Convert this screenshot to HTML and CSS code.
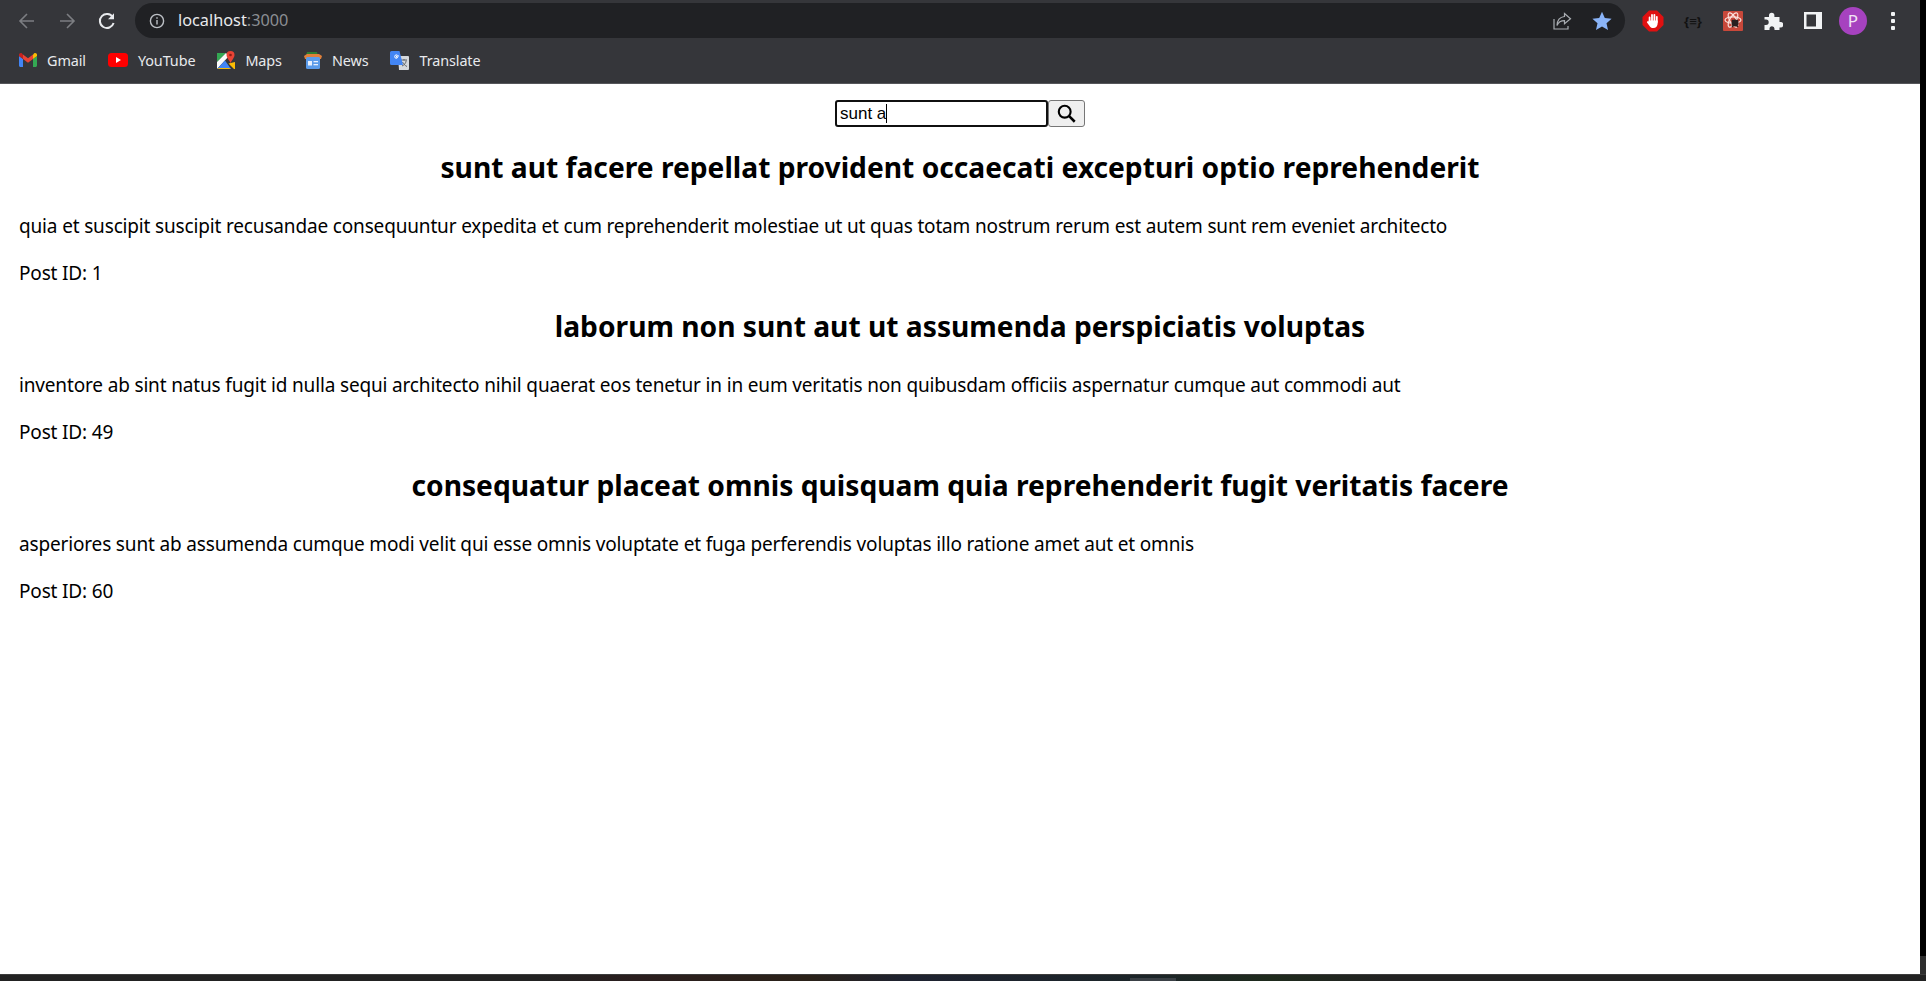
FILE: index.html
```html
<!DOCTYPE html>
<html lang="en">
  <head>
    <meta charset="UTF-8" />
    <meta name="viewport" content="width=device-width, initial-scale=1.0" />
    <title>localhost:3000</title>
    <link rel="stylesheet" href="styles.css">
  </head>
  <body>
    <div class="screen">
      <div class="window">
        <!-- Browser toolbar -->
        <header class="toolbar">
          <div class="nav-btn">
            <svg width="20" height="20" viewBox="0 0 20 20" fill="none" stroke="#7c7e82" stroke-width="1.6"><path d="M17 10H3.500M10 3l-7 7 7 7" /></svg>
          </div>
          <div class="nav-btn">
            <svg width="20" height="20" viewBox="0 0 20 20" fill="none" stroke="#7c7e82" stroke-width="1.6"><path d="M3 10h13.500M10 3l7 7-7 7" /></svg>
          </div>
          <div class="nav-btn">
            <svg width="20" height="20" viewBox="0 0 20 20" fill="none" stroke="#e8eaed" stroke-width="2"><path d="M15.800 6.200A7 7 0 1 0 16.600 12" /><path d="M17 2.200v6h-6z" fill="#e8eaed" stroke="none" /></svg>
          </div>
          <div class="omnibox">
            <svg class="info-icon" width="16" height="16" viewBox="0 0 16 16" fill="none" stroke="#bdc1c6" stroke-width="1.4"><circle cx="8" cy="8" r="6.600" /><path d="M8 7v4.600M8 4.200v1.600" /></svg>
            <span class="url">localhost<span class="url-port">:3000</span></span>
            <svg class="share-icon" width="20" height="20" viewBox="0 0 20 20" fill="none" stroke="#a9adb2" stroke-width="1.2"><path d="M2 8v10h14v-3" /><path d="M12.500 2.500l6 5.200-6 5v-3C9 9.700 6.500 11 5 14.500c.2-5 3-8.500 7.500-9z" /></svg>
            <svg class="star-icon" width="20" height="20" viewBox="0 0 20 20"><path d="M10 .8l2.800 6.300 6.800.7-5.100 4.500 1.500 6.700L10 15.500 4 19l1.500-6.700L.4 7.800l6.800-.7z" fill="#8ab4f8" /></svg>
          </div>
          <div class="extensions">
            <div class="ext-btn">
              <svg width="22" height="22" viewBox="0 0 22 22"><path d="M7 .5h8L21.500 7v8L15 21.500H7L.5 15V7z" fill="#e01010" /><g fill="none" stroke="#fff" stroke-width="1.800" stroke-linecap="round"><path d="M7.600 12V7.500M10 11V5M12.400 11V4.800M14.800 12V6.800" /></g><path d="M6.700 10.500h9V13c0 3-1.700 5-4.400 5-2 0-3-.8-3.900-2.300L5 12.500c-.5-1 .8-1.800 1.700-1z" fill="#fff" /></svg>
            </div>
            <div class="ext-btn">
              <span class="json-icon">{≡}</span>
            </div>
            <div class="ext-btn">
              <svg width="20" height="20" viewBox="0 0 20 20"><rect width="20" height="20" rx="1" fill="#c8483a" /><g fill="none" stroke="#fbe3de" stroke-width="1.200"><ellipse cx="10" cy="9" rx="8" ry="3.200" /><ellipse cx="10" cy="9" rx="8" ry="3.200" transform="rotate(60 10 9)" /><ellipse cx="10" cy="9" rx="8" ry="3.200" transform="rotate(120 10 9)" /></g><circle cx="12" cy="12" r="3.500" fill="#2a2020" /><path d="M9 9l6 7M15 9l-6 7" stroke="#2a2020" stroke-width="1.300" /></svg>
            </div>
            <div class="ext-btn">
              <svg width="20" height="20" viewBox="0 0 20 20"><path d="M1.500 6H6V4.500a2.700 2.700 0 0 1 5.400 0V6h5.100v5h1a2.800 2.800 0 0 1 0 5.600h-1V19H11.500v-1.300a2.500 2.500 0 0 0-5 0V19h-5v-5H3a2.700 2.700 0 0 0 0-5.400H1.500z" fill="#f1f3f4" /></svg>
            </div>
            <div class="ext-btn">
              <svg width="18" height="17" viewBox="0 0 18 17"><path d="M0 0h18v17H0zM2.500 2.500v12H12v-12z" fill="#f1f3f4" fill-rule="evenodd" /></svg>
            </div>
            <div class="ext-btn">
              <span class="avatar">P</span>
            </div>
            <div class="ext-btn">
              <span class="dots"><i></i><i></i><i></i></span>
            </div>
          </div>
        </header>

        <!-- Bookmarks -->
        <nav class="bookmarks">
          <a class="bookmark" href="#">
            <svg width="18" height="14" viewBox="0 0 18 14"><path d="M0 3v9.500C0 13.300.7 14 1.500 14H4V6z" fill="#4285f4" /><path d="M18 3v9.500c0 .8-.7 1.500-1.500 1.500H14V6z" fill="#34a853" /><path d="M14 1.500V6l4-3V1.800C18 .3 16.300-.500 15 .4z" fill="#fbbc04" /><path d="M4 6V1.500L9 5.300l5-3.800V6L9 9.800z" fill="#ea4335" /><path d="M0 1.800V3l4 3V1.500L3 .4C1.700-.500 0 .3 0 1.800z" fill="#c5221f" /></svg>
            <span>Gmail</span>
          </a>
          <a class="bookmark" href="#">
            <svg width="20" height="14" viewBox="0 0 20 14"><rect width="20" height="14" rx="3.500" fill="#f00" /><path d="M8 4l5 3-5 3z" fill="#fff" /></svg>
            <span>YouTube</span>
          </a>
          <a class="bookmark" href="#">
            <svg width="18" height="18" viewBox="0 0 18 18"><path d="M0 2h9L0 11z" fill="#34a853" /><path d="M0 11l9-9 3 3L0 18z" fill="#fbfbfb" /><path d="M0 18L8 9.500 14 18z" fill="#4285f4" /><path d="M0 18h14l-2 -1H2z" fill="#fbbc04" /><path d="M11.500 12.500L17 18h1v-7z" fill="#fbbc04" /><path d="M13.500 0a4 4 0 0 1 4 4c0 3-4 6.500-4 8.500 0-2-4-5.500-4-8.500a4 4 0 0 1 4-4z" fill="#ea4335" /><circle cx="13.500" cy="4" r="1.300" fill="#8c1c13" /></svg>
            <span>Maps</span>
          </a>
          <a class="bookmark" href="#">
            <svg width="18" height="17" viewBox="0 0 18 17"><path d="M3 0h10l1 4H2z" fill="#2e7d32" /><path d="M0 4l3-2h12l3 2-1 3H1z" fill="#e0803a" /><rect x="2" y="5" width="14" height="12" rx="1.500" fill="#5a9bea" /><rect x="4" y="9" width="4" height="4.500" fill="#e8f0fe" /><rect x="9.500" y="9" width="4.500" height="1.300" fill="#e8f0fe" /><rect x="9.500" y="12" width="4.500" height="1.300" fill="#e8f0fe" /></svg>
            <span>News</span>
          </a>
          <a class="bookmark" href="#">
            <svg width="19" height="19" viewBox="0 0 19 19"><path d="M8 5h10a1 1 0 0 1 1 1v12a1 1 0 0 1-1 1H9z" fill="#d5d8dc" /><path d="M11 9h6M14 8v1.500M12 15c2.500-1 4-3 4.200-5.500M12.500 11c1 2 2.500 3.500 4.500 4.500" fill="none" stroke="#5f6368" stroke-width="1" /><path d="M1.500 0h8L13 14H1.500A1.500 1.500 0 0 1 0 12.500v-11A1.500 1.500 0 0 1 1.500 0z" fill="#4285f4" /><path d="M9 5H6.500v1.300h1.200c-.2.700-.8 1-1.300 1a1.700 1.700 0 0 1 0-3.400c.4 0 .8.100 1.100.4" fill="none" stroke="#fff" stroke-width="1" /></svg>
            <span>Translate</span>
          </a>
        </nav>

        <!-- Page content -->
        <main class="page">
          <form class="search-form">
            <div class="search-input"><span>sunt a</span><i class="caret"></i></div>
            <button type="button" class="search-btn">
              <svg width="19" height="19" viewBox="0 0 18 18" fill="none" stroke="#000" stroke-width="2"><circle cx="7.300" cy="7.300" r="5.600" /><path d="M11.300 11.300l5.500 5.500" stroke-width="2.400" /></svg>
            </button>
          </form>

          <article class="post">
            <h2>sunt aut facere repellat provident occaecati excepturi optio reprehenderit</h2>
            <p>quia et suscipit suscipit recusandae consequuntur expedita et cum reprehenderit molestiae ut ut quas totam nostrum rerum est autem sunt rem eveniet architecto</p>
            <p>Post ID: 1</p>
          </article>
          <article class="post">
            <h2>laborum non sunt aut ut assumenda perspiciatis voluptas</h2>
            <p>inventore ab sint natus fugit id nulla sequi architecto nihil quaerat eos tenetur in in eum veritatis non quibusdam officiis aspernatur cumque aut commodi aut</p>
            <p>Post ID: 49</p>
          </article>
          <article class="post">
            <h2>consequatur placeat omnis quisquam quia reprehenderit fugit veritatis facere</h2>
            <p>asperiores sunt ab assumenda cumque modi velit qui esse omnis voluptate et fuga perferendis voluptas illo ratione amet aut et omnis</p>
            <p>Post ID: 60</p>
          </article>
        </main>
      </div>

      <div class="edge">
        <div class="edge-top"></div>
        <div class="edge-bottom"></div>
      </div>
    </div>
    <div class="taskbar"></div>
  </body>
</html>
```

FILE: styles.css
```css
* {
  box-sizing: border-box;
}

html,
body {
  height: 100%;
  margin: 0;
  overflow: hidden;
}

body {
  display: flex;
  flex-direction: column;
  font-family: "Noto Sans", "Open Sans", sans-serif;
  color: #000;
  background-color: #fff;
}

.screen {
  display: flex;
  height: 974px;
}

.window {
  width: 1920px;
  display: flex;
  flex-direction: column;
}

/* Right hand edge */
.edge {
  flex: 1;
  display: flex;
  flex-direction: column;
}

.edge-top {
  height: 956px;
  background-color: #000;
}

.edge-bottom {
  flex: 1;
  background-color: #2e2e2e;
}

.taskbar {
  flex: 1;
  border-top: 1px solid #3c3c3c;
  background-color: #222;
  background-image:
    linear-gradient(#3a4045, #3a4045),
    linear-gradient(90deg, #222 28%, #2a1e1e 33%, #2a2118 42%, #1e2230 47%, #1c2528 60%, #1e2a1c 66%, #222 72%);
  background-size: 46px 3px, 100% 100%;
  background-position: 1130px 100%, 0 0;
  background-repeat: no-repeat;
}

/* Toolbar */
.toolbar {
  height: 42px;
  display: flex;
  align-items: center;
  padding: 0 7px 1px;
  background-color: #35363a;
}

.nav-btn,
.ext-btn {
  width: 40px;
  height: 40px;
  display: flex;
  align-items: center;
  justify-content: center;
  flex-shrink: 0;
}

.omnibox {
  flex: 1;
  height: 35px;
  margin: 0 8px;
  display: flex;
  align-items: center;
  padding: 0 13px 0 14px;
  border-radius: 18px;
  background-color: #202124;
}

.url {
  margin-left: 13px;
  padding-bottom: 1px;
  font-size: 16.3px;
  color: #e8eaed;
}

.url-port {
  color: #8b8e93;
}

.share-icon {
  margin-left: auto;
}

.star-icon {
  margin-left: 20px;
}

.extensions {
  display: flex;
  align-items: center;
}

.json-icon {
  font-size: 13px;
  font-weight: bold;
  color: #111;
}

.avatar {
  width: 28px;
  height: 28px;
  display: flex;
  align-items: center;
  justify-content: center;
  border-radius: 50%;
  font-size: 17px;
  color: #f1e4f5;
  background-color: #a642bf;
}

.dots {
  display: flex;
  flex-direction: column;
  gap: 3px;
}

.dots i {
  width: 4px;
  height: 4px;
  border-radius: 1px;
  background-color: #f1f3f4;
}

/* Bookmarks bar */
.bookmarks {
  height: 42px;
  display: flex;
  align-items: center;
  gap: 22px;
  padding: 0 0 5px 19px;
  border-bottom: 1px solid #55565a;
  background-color: #35363a;
}

.bookmark {
  display: flex;
  align-items: center;
  gap: 10px;
  font-size: 14.4px;
  letter-spacing: -0.1px;
  color: #e8eaed;
  text-decoration: none;
}

/* Page */
.page {
  flex: 1;
  padding: 16px 19px 0;
  background-color: #fff;
}

.search-form {
  display: flex;
  justify-content: center;
  margin-bottom: 1px;
}

.search-input {
  width: 213px;
  height: 27px;
  display: flex;
  align-items: center;
  padding-left: 3px;
  border: 2px solid #101010;
  border-radius: 3px;
  font-family: "Liberation Sans", Arial, sans-serif;
  font-size: 17px;
}

.caret {
  width: 1px;
  height: 19px;
  background-color: #000;
}

.search-btn {
  width: 37px;
  height: 27px;
  display: flex;
  align-items: center;
  justify-content: center;
  padding: 0;
  border: 1px solid #767676;
  border-radius: 3px;
  background-color: #efefef;
}

.post h2 {
  margin: 0;
  padding-top: 19px;
  font-size: 28.2px;
  font-weight: bold;
  line-height: 40px;
  text-align: center;
}

.post p {
  margin: 26px 0 0;
  font-size: 19px;
  letter-spacing: -0.16px;
  line-height: 27px;
}

.post p + p {
  margin-top: 20px;
}
```
